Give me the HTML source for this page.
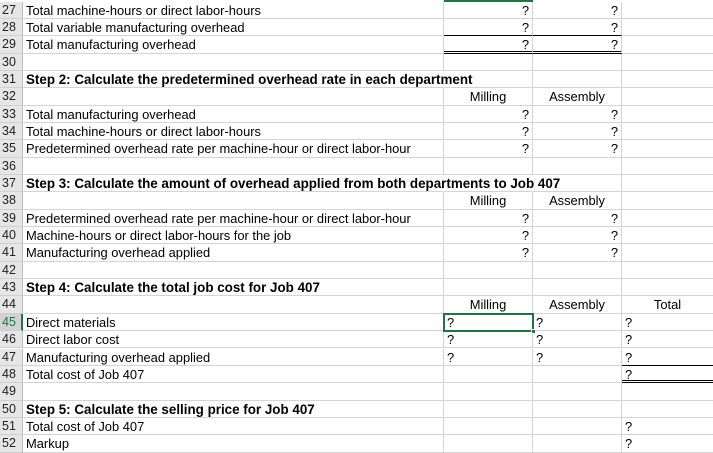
<!DOCTYPE html>
<html><head><meta charset="utf-8"><style>
*{margin:0;padding:0;box-sizing:border-box}
body{width:713px;height:452px;overflow:hidden;background:#fff;font-family:"Liberation Sans",Arial,sans-serif;font-size:12.9px;color:#000;position:relative}
.r{position:absolute;left:0;width:713px;height:17.34px;display:flex}
.h{width:23px;height:100%;background:#e6e6e6;border-right:1px solid #bcbcbc;border-bottom:1px solid #cfcfcf;color:#222;font-size:12.5px;line-height:17px;padding-left:2px}
.c{height:100%;border-right:1px solid #d4d4d4;border-bottom:1px solid #d4d4d4;line-height:17px;padding:0 3px;white-space:nowrap;overflow:visible;position:relative}
.a{width:421px}.b{width:89px}.cc{width:89px}.d{width:91px;border-right:none}
.R{text-align:right}.C{text-align:center}
.nb{border-right-color:transparent}
.bold{font-weight:bold;font-size:13.4px}
.tb{border-bottom:1px solid #000}
.db{border-bottom:3px double #000}
.sel{background:#d2d2d2;color:#217346;border-right:2px solid #217346}
</style></head><body>
<div style="position:absolute;left:444px;top:0;width:89px;height:2px;background:#217346;z-index:3"></div>

<div class="r" style="top:1.7px"><div class="h">27</div><div class="c a">Total machine-hours or direct labor-hours</div><div class="c b R">?</div><div class="c cc R">?</div><div class="c d"></div></div>
<div class="r" style="top:19.04px"><div class="h">28</div><div class="c a">Total variable manufacturing overhead</div><div class="c b R tb">?</div><div class="c cc R tb">?</div><div class="c d"></div></div>
<div class="r" style="top:36.38px"><div class="h">29</div><div class="c a">Total manufacturing overhead</div><div class="c b R db">?</div><div class="c cc R db">?</div><div class="c d"></div></div>
<div class="r" style="top:53.72px"><div class="h">30</div><div class="c a"></div><div class="c b"></div><div class="c cc"></div><div class="c d"></div></div>
<div class="r" style="top:71.06px"><div class="h">31</div><div class="c a nb bold">Step 2: Calculate the predetermined overhead rate in each department</div><div class="c b"></div><div class="c cc"></div><div class="c d"></div></div>
<div class="r" style="top:88.4px"><div class="h">32</div><div class="c a"></div><div class="c b C">Milling</div><div class="c cc C">Assembly</div><div class="c d"></div></div>
<div class="r" style="top:105.74px"><div class="h">33</div><div class="c a">Total manufacturing overhead</div><div class="c b R">?</div><div class="c cc R">?</div><div class="c d"></div></div>
<div class="r" style="top:123.08px"><div class="h">34</div><div class="c a">Total machine-hours or direct labor-hours</div><div class="c b R">?</div><div class="c cc R">?</div><div class="c d"></div></div>
<div class="r" style="top:140.42px"><div class="h">35</div><div class="c a">Predetermined overhead rate per machine-hour or direct labor-hour</div><div class="c b R">?</div><div class="c cc R">?</div><div class="c d"></div></div>
<div class="r" style="top:157.76px"><div class="h">36</div><div class="c a"></div><div class="c b"></div><div class="c cc"></div><div class="c d"></div></div>
<div class="r" style="top:175.1px"><div class="h">37</div><div class="c a nb bold">Step 3: Calculate the amount of overhead applied from both departments to Job 407</div><div class="c b nb"></div><div class="c cc"></div><div class="c d"></div></div>
<div class="r" style="top:192.44px"><div class="h">38</div><div class="c a"></div><div class="c b C">Milling</div><div class="c cc C">Assembly</div><div class="c d"></div></div>
<div class="r" style="top:209.78px"><div class="h">39</div><div class="c a">Predetermined overhead rate per machine-hour or direct labor-hour</div><div class="c b R">?</div><div class="c cc R">?</div><div class="c d"></div></div>
<div class="r" style="top:227.12px"><div class="h">40</div><div class="c a">Machine-hours or direct labor-hours for the job</div><div class="c b R">?</div><div class="c cc R">?</div><div class="c d"></div></div>
<div class="r" style="top:244.46px"><div class="h">41</div><div class="c a">Manufacturing overhead applied</div><div class="c b R">?</div><div class="c cc R">?</div><div class="c d"></div></div>
<div class="r" style="top:261.8px"><div class="h">42</div><div class="c a"></div><div class="c b"></div><div class="c cc"></div><div class="c d"></div></div>
<div class="r" style="top:279.14px"><div class="h">43</div><div class="c a bold">Step 4: Calculate the total job cost for Job 407</div><div class="c b"></div><div class="c cc"></div><div class="c d"></div></div>
<div class="r" style="top:296.48px"><div class="h">44</div><div class="c a"></div><div class="c b C">Milling</div><div class="c cc C">Assembly</div><div class="c d C">Total</div></div>
<div class="r" style="top:313.82px"><div class="h sel">45</div><div class="c a">Direct materials</div><div class="c b">?</div><div class="c cc">?</div><div class="c d">?</div></div>
<div class="r" style="top:331.16px"><div class="h">46</div><div class="c a">Direct labor cost</div><div class="c b">?</div><div class="c cc">?</div><div class="c d">?</div></div>
<div class="r" style="top:348.5px"><div class="h">47</div><div class="c a">Manufacturing overhead applied</div><div class="c b">?</div><div class="c cc">?</div><div class="c d tb">?</div></div>
<div class="r" style="top:365.84px"><div class="h">48</div><div class="c a">Total cost of Job 407</div><div class="c b"></div><div class="c cc"></div><div class="c d db">?</div></div>
<div class="r" style="top:383.18px"><div class="h">49</div><div class="c a"></div><div class="c b"></div><div class="c cc"></div><div class="c d"></div></div>
<div class="r" style="top:400.52px"><div class="h">50</div><div class="c a bold">Step 5: Calculate the selling price for Job 407</div><div class="c b"></div><div class="c cc"></div><div class="c d"></div></div>
<div class="r" style="top:417.86px"><div class="h">51</div><div class="c a">Total cost of Job 407</div><div class="c b"></div><div class="c cc"></div><div class="c d">?</div></div>
<div class="r" style="top:435.2px"><div class="h">52</div><div class="c a">Markup</div><div class="c b"></div><div class="c cc"></div><div class="c d">?</div></div>

<div style="position:absolute;left:443px;top:312.5px;width:91px;height:19px;border:2px solid #217346;z-index:4"></div>
<div style="position:absolute;left:531px;top:328.5px;width:5px;height:5px;background:#217346;border:1px solid #fff;z-index:5"></div>
</body></html>
